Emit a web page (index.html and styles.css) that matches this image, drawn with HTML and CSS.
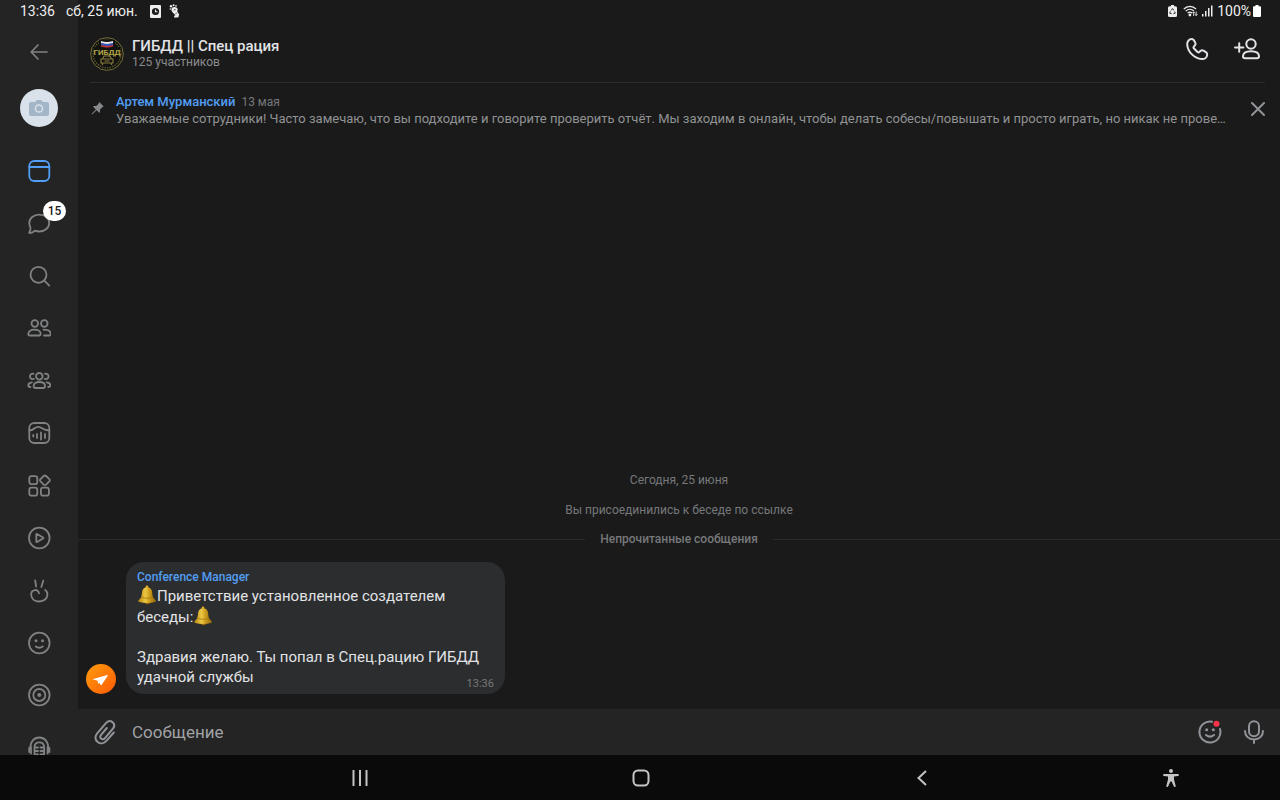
FILE: index.html
```html
<!DOCTYPE html>
<html lang="ru">
<head>
  <meta charset="UTF-8" />
  <meta name="viewport" content="width=device-width, initial-scale=1.0"/>
  <title>ГИБДД || Спец рация</title>
  <link rel="stylesheet" href="styles.css">
</head>
<body>

<div class="status-bar">
  <span class="clock">13:36</span>
  <span class="date">сб, 25 июн.</span>
  <svg class="status-app" width="11" height="13" viewBox="0 0 11 13"><rect width="11" height="13" rx="1" fill="#eee"/><circle cx="5.5" cy="6.5" r="3.6" fill="#1a1a1a"/><path d="M5.5 4.5v2.2h2" fill="none" stroke="#eee" stroke-width="1.1"/></svg>
  <svg class="status-app" width="11" height="14" viewBox="0 0 11 14" fill="#eee"><circle cx="2" cy="2.2" r="1.2"/><circle cx="4.6" cy="1.2" r="1"/><circle cx="7" cy="1.9" r=".8"/><circle cx="1.3" cy="5" r=".8"/><path d="M3 3.800c2-1.500 5-.8 5.500 1 .4 1.400-.4 2-.1 3.200l1.700 2.200-.6 3-3.800.5-.8-1.800 1.500-.7-1.900-2C2.500 8 1.800 5 3 3.800z"/><path d="M4.800 6l1.800-.4M6.400 9.800l1.300-.5" stroke="#222" stroke-width=".8"/></svg>

  <div class="status-right">
    <svg width="9" height="12" viewBox="0 0 9 12"><path d="M3 0h3v1.200h1.500A1.500 1.500 0 0 1 9 2.700v7.800A1.500 1.500 0 0 1 7.500 12h-6A1.500 1.500 0 0 1 0 10.500V2.700a1.500 1.500 0 0 1 1.500-1.500H3z" fill="#eee"/><path d="M3.200 5.400L4.500 3.600l1.300 1.800M6.600 6.600l.7 1.500-1.900.6M2.400 6.400L1.700 8.200l2 .6" fill="none" stroke="#1a1a1a" stroke-width=".9"/></svg>
    <svg class="wifi" width="15" height="12" viewBox="0 0 15 12" fill="none" stroke="#eee" stroke-width="1.200"><path d="M.8 4C4.300.4 9.700.4 13 4M2.700 6.100c2.400-2.500 6-2.500 8.300 0M4.600 8.200c1.300-1.400 3.300-1.400 4.600 0"/><circle cx="6.900" cy="10" r=".8" fill="#eee"/><path d="M10.700 11V7M9.500 8.200l1.200-1.300 1.200 1.300M13.200 6.500v4M12.200 9.300l1 1.300 1.200-1.300" stroke-width=".9"/></svg>
    <svg width="11" height="12" viewBox="0 0 11 12" fill="#eee"><rect x="0" y="9" width="1.500" height="2.500"/><rect x="3" y="6" width="1.500" height="5.500"/><rect x="6" y="3" width="1.500" height="8.500"/><rect x="9" y=".5" width="1.500" height="11"/></svg>
    <span class="charge">100%</span>
    <svg width="8" height="12" viewBox="0 0 8 12"><path d="M2.500 0h3v1.200H7a1 1 0 0 1 1 1V11a1 1 0 0 1-1 1H1a1 1 0 0 1-1-1V2.200a1 1 0 0 1 1-1h1.500z" fill="#fff"/></svg>
  </div>
</div>

<div class="app">

  <aside class="sidebar">
    <button class="icon-btn back" aria-label="Назад">
      <svg width="18" height="16" viewBox="0 0 18 16"><path d="M17 8H1.500M8 1L1.200 8 8 15"/></svg>
    </button>
    <a class="profile" href="#" aria-label="Профиль">
      <svg width="20" height="16" viewBox="0 0 20 16"><path d="M2 2h4l1.300-1.600Q7.600 0 8.200 0h3.600q.6 0 .9.400L14 2h4a2 2 0 0 1 2 2v10a2 2 0 0 1-2 2H2a2 2 0 0 1-2-2V4a2 2 0 0 1 2-2z" fill="#a3b6c7"/><circle cx="10" cy="8.500" r="3.600" fill="none" stroke="#d9e2ea" stroke-width="1.500"/></svg>
    </a>

    <ul class="menu">
      <li><a class="active" href="#" aria-label="Новости"><svg viewBox="0 0 24 24"><rect x="2.300" y="2" width="20" height="20" rx="5"/><path d="M2.300 8h20"/></svg></a></li>
      <li><a href="#" aria-label="Сообщения"><svg viewBox="0 0 24 24"><path d="M12.300 2.700c5.600 0 9.900 3.500 9.900 8.300s-4.300 8.500-9.900 8.500c-1.600 0-3-.3-4.300-.9-1.500 1.500-3.500 2.400-5.300 2.400-.5 0-.7-.5-.4-.9 1-1.500 1.400-2.800 1.200-4.500C2.700 14.300 2.300 12.700 2.300 11c0-4.800 4.400-8.300 10-8.300z"/></svg><span class="badge">15</span></a></li>
      <li><a href="#" aria-label="Поиск"><svg viewBox="0 0 24 24"><circle cx="11.500" cy="10.800" r="8"/><path d="M17.300 16.600l5 5"/></svg></a></li>
      <li><a href="#" aria-label="Друзья"><svg viewBox="0 0 24 24"><circle cx="7.800" cy="7.500" r="3.300"/><circle cx="17.300" cy="7.500" r="3.300"/><path d="M1.300 18c0-3 2.800-4.300 6.200-4.300s6.200 1.300 6.200 4.300c0 1-.4 1.500-1.400 1.500H2.700c-1 0-1.400-.5-1.400-1.500zM16.500 13.700c4 0 7.200 1.300 7.200 4.300 0 1-.4 1.500-1.400 1.500H17"/></svg></a></li>
      <li><a href="#" aria-label="Сообщества"><svg viewBox="0 0 24 24"><circle cx="12.300" cy="7.300" r="3.300"/><path d="M6.600 17c0-2.700 2.500-4 5.700-4s5.700 1.300 5.700 4c0 1.400-.5 2-1.800 2H8.400c-1.300 0-1.800-.6-1.800-2zM6.500 4.800a2.700 2.700 0 1 0 .3 5M18 4.800a2.700 2.700 0 1 1-.3 5M5 13.300c-2.400.2-3.700 1.300-3.700 3 0 1.200.6 1.700 1.800 1.700h.3M19.600 13.300c2.400.2 3.700 1.300 3.700 3 0 1.200-.6 1.700-1.800 1.700h-.3"/></svg></a></li>
      <li><a href="#" aria-label="Музыка"><svg viewBox="0 0 24 24"><rect x="2.300" y="2" width="20" height="20" rx="5"/><path d="M2.300 9.500c2.500 0 3.500-.8 5.300-2.300 2.300-1.800 4.800-1.800 7.400 0 2.200 1.500 4.300 2.300 7.300 2.300M6.300 14v1.500M10 13v4M14 11.300V18.500M18 13v4"/></svg></a></li>
      <li><a href="#" aria-label="Сервисы"><svg viewBox="0 0 24 24"><rect x="2.300" y="2.200" width="8" height="8" rx="2.200"/><rect x="2.300" y="13.700" width="8" height="8" rx="2.200"/><rect x="13.900" y="13.700" width="8" height="8" rx="2.200"/><path d="M16.700 2q1.200-1 2.400 0l3.200 3.100q1.100 1.100 0 2.300l-3.200 3.200q-1.200 1-2.400 0l-3.200-3.200q-1-1.200 0-2.300z"/></svg></a></li>
      <li><a href="#" aria-label="Видео"><svg viewBox="0 0 24 24"><circle cx="12.300" cy="12" r="10.300"/><path d="M9.300 8.400v7.200q0 .8.700.4l6-3.500q.7-.5 0-1L10 8q-.7-.4-.7.400z"/></svg></a></li>
      <li><a href="#" aria-label="Клипы"><svg viewBox="0 0 24 24"><path d="M8.200 1.500l.9 6M16.300 1.700l-2 6.300M12 14.300c-.2-2.300-2.200-3.600-4.200-3.200C5.300 11.500 4 13.500 4.200 16c.3 4 3.600 6.500 8 6.500 4.700 0 8.200-2.900 8.200-6.900 0-2-.8-3.600-2.200-4.600"/></svg></a></li>
      <li><a href="#" aria-label="Стикеры"><svg viewBox="0 0 24 24"><circle cx="12.300" cy="12" r="10.300"/><path d="M8.800 15.500q3.500 2.500 7 0"/><circle class="dot" cx="9" cy="9.700" r="1.500"/><circle class="dot" cx="15.500" cy="9.700" r="1.500"/></svg></a></li>
      <li><a href="#" aria-label="Рядом"><svg viewBox="0 0 24 24"><circle cx="12.300" cy="12" r="10.300"/><circle cx="12.300" cy="12" r="6"/><circle class="dot" cx="12.300" cy="12" r="2"/></svg></a></li>
      <li><a href="#" aria-label="Подкасты"><svg viewBox="0 0 24 24"><path d="M3.300 12C3.300 5.500 7 1.500 12.300 1.500s9 4 9 10.500M2.200 12v4M22.400 12v4M4 11v6.500M20.600 11v6.500M7.500 22V11c0-3 2-4.700 4.800-4.700S17.100 8 17.100 11v11M8 11.500h3M13.500 11.500h3.500M8 15h3M13.500 15h3.500M8 18.500h3M13.500 18.500h3.500"/></svg></a></li>
    </ul>
  </aside>

  <main class="chat">

    <header class="chat-header">
      <svg class="chat-logo" width="34" height="34" viewBox="0 0 34 34">
        <circle cx="17" cy="17" r="16.300" fill="#11120f" stroke="#77703a" stroke-width="1"/>
        <circle cx="17" cy="17" r="13.800" fill="none" stroke="#57522c" stroke-width="1.500" stroke-dasharray="1.500 1"/>
        <path d="M4 10h26v9H4zM9 3h16v8H9z" fill="#11120f"/>
        <path d="M11 4q6 2 12 0v2q-6 2-12 0z" fill="#e8e8ee"/>
        <path d="M11 6q6 2 12 0v2q-6 2-12 0z" fill="#3a58c2"/>
        <path d="M11 8q6 2 12 0v1.500q-6 2-12 0z" fill="#c6353f"/>
        <text x="17" y="18" text-anchor="middle" class="logo-text">ГИБДД</text>
        <path d="M12.500 22l1.500-3h6l1.500 3M11 22h12v4H11zM12.500 26v2M21.500 26v2M14.500 24h5" fill="none" stroke="#81783c" stroke-width="1.200"/>
      </svg>
      <div class="chat-info">
        <h1>ГИБДД || Спец рация</h1>
        <p>125 участников</p>
      </div>
      <button class="icon-btn header-btn" aria-label="Позвонить">
        <svg width="24" height="24" viewBox="0 0 24 24"><path d="M6.800 2C4 2 2 4.500 2.200 7.500 2.600 15 9.500 21.500 16.700 22c3 .2 5.300-1.600 5.500-4.300.1-1-.2-1.700-1-2.300l-2.700-1.700c-1-.7-2-.6-2.800.1l-1.400 1.300c-.5.500-1.200.4-1.800-.1l-3.700-3.700c-.5-.6-.5-1.200 0-1.700L10 8.300c.8-.9.800-1.800.2-2.700L8.700 3C8.300 2.300 7.700 2 6.800 2z"/></svg>
      </button>
      <button class="icon-btn header-btn" aria-label="Добавить участника">
        <svg width="26" height="24" viewBox="0 0 26 24"><circle cx="17" cy="7" r="4.700"/><path d="M9 19.300c0-3.300 3.600-5 8-5s8 1.700 8 5c0 1.500-.7 2-2 2H11c-1.300 0-2-.5-2-2zM5.200 6.300v8.400M1 10.500h8.400"/></svg>
      </button>
    </header>

    <section class="pinned">
      <svg class="pin" width="13" height="13" viewBox="0 0 13 13"><path d="M7.800.6q.5-.5 1 0l3.400 3.400q.5.500 0 1l-1 .3-2.300 2.400.1 2.400q-.2 1.100-1 .4L5.600 8.200 1.300 12.300.5 12.500l.2-.8L4.800 7.400 2.400 5Q1.900 4.200 2.900 4l2.400.1 2.300-2.300z" fill="#87888a"/></svg>
      <div class="pinned-body">
        <div class="pinned-head"><a href="#">Артем Мурманский</a><time>13 мая</time></div>
        <p>Уважаемые сотрудники! Часто замечаю, что вы подходите и говорите проверить отчёт. Мы заходим в онлайн, чтобы делать собесы/повышать и просто играть, но никак не прове…</p>
      </div>
      <button class="icon-btn close" aria-label="Закрыть">
        <svg width="14" height="14" viewBox="0 0 14 14"><path d="M1 1l12 12M13 1L1 13"/></svg>
      </button>
    </section>

    <section class="messages">
      <p class="service">Сегодня, 25 июня</p>
      <p class="service">Вы присоединились к беседе по ссылке</p>
      <div class="unread">Непрочитанные сообщения</div>

      <div class="message">
        <svg class="sender" width="30" height="30" viewBox="0 0 30 30">
          <defs><linearGradient id="orange" x1="0" y1="0" x2="1" y2="1"><stop offset="0" stop-color="#ff9c0c"/><stop offset="1" stop-color="#ff5a04"/></linearGradient></defs>
          <circle cx="15" cy="15" r="15" fill="url(#orange)"/>
          <path d="M6.500 15.300L21.300 11q.9-.1.500.8L15.500 21q-.5.700-.9 0L13.200 18.500 12 20.300l-.3-3.500z" fill="#fff"/>
          <path d="M12 17.500l6-4" fill="none" stroke="#ffd9b8" stroke-width=".5"/>
        </svg>
        <div class="bubble">
          <a class="author" href="#">Conference Manager</a>
          <p class="text"><svg class="bell" viewBox="0 0 20 20"><use href="#bell"/></svg>Приветствие установленное создателем<br>беседы:<svg class="bell" viewBox="0 0 20 20"><use href="#bell"/></svg><br><br>Здравия желаю. Ты попал в Спец.рацию ГИБДД<br>удачной службы</p>
          <time>13:36</time>
        </div>
      </div>
    </section>

    <form class="composer">
      <button type="button" class="icon-btn" aria-label="Прикрепить">
        <svg width="24" height="26" viewBox="0 0 24 26"><path d="M20.800 13.500l-7.400 8.300c-2.400 2.700-6 3.400-8.700 1.200-2.900-2.300-2.900-5.900-.5-8.700l8.500-10c2-2.300 4.600-2.800 6.700-1.200 2.200 1.800 2.300 4.400.5 6.600l-7.700 9.200c-1.200 1.500-2.800 1.800-4 .8-1.200-1-1.200-2.500-.1-3.900l5.700-6.800"/></svg>
      </button>
      <input type="text" name="message" placeholder="Сообщение" aria-label="Сообщение">
      <button type="button" class="icon-btn smile" aria-label="Стикеры">
        <svg width="24" height="24" viewBox="0 0 24 24"><path d="M14 1.700a10.500 10.500 0 1 0 8 7.300M8 15q4 3.300 8 0"/><circle class="dot" cx="8.700" cy="9.700" r="1.500"/><circle class="dot" cx="15.300" cy="9.700" r="1.500"/><circle cx="18.500" cy="3.800" r="3" class="red"/></svg>
      </button>
      <button type="button" class="icon-btn" aria-label="Голосовое сообщение">
        <svg width="20" height="24" viewBox="0 0 20 24"><rect x="5" y="1.200" width="10" height="15" rx="5"/><path d="M1 11c0 5 3.800 8.500 9 8.500s9-3.500 9-8.500M10 19.500V23"/></svg>
      </button>
    </form>

  </main>
</div>

<nav class="system-nav">
  <button aria-label="Недавние"><svg width="16" height="16" viewBox="0 0 16 16"><path d="M1.500 0v16M8 0v16M14.500 0v16"/></svg></button>
  <button aria-label="Домой"><svg width="18" height="18" viewBox="0 0 18 18"><rect x="1.500" y="1.500" width="15" height="15" rx="4.500"/></svg></button>
  <button aria-label="Назад"><svg width="10" height="16" viewBox="0 0 10 16"><path d="M9 1L1.500 8 9 15"/></svg></button>
  <button aria-label="Специальные возможности"><svg width="16" height="18" viewBox="0 0 16 18"><g class="person"><circle cx="8" cy="2" r="2"/><path d="M1 5h14q.9.100.9.900t-.9 1l-4 .5v3l1.700 6.600q.1.900-.8 1t-1.100-.7L8.600 12.500H7.400l-2.200 4.800q-.3.800-1.100.7t-.8-1L5 10.400v-3l-4-.5q-.9-.2-.9-1T1 5z"/></g></svg></button>
</nav>

<!-- Shared bell drawing -->
<svg class="sprite" width="0" height="0">
  <defs>
    <linearGradient id="gold" x1="0" y1="0" x2="1" y2="0"><stop offset="0" stop-color="#b98512"/><stop offset=".4" stop-color="#ecc843"/><stop offset=".65" stop-color="#cb991b"/><stop offset="1" stop-color="#8e650b"/></linearGradient>
    <symbol id="bell" viewBox="0 0 20 20">
      <ellipse cx="10.500" cy="17.800" rx="2.600" ry="1.500" fill="#8a5f08"/>
      <circle cx="10" cy="2" r="1.400" fill="#d9a92a"/>
      <path d="M10 2.300c3.300 0 5 2.200 5.200 5.500.2 3.500.8 5.400 3.300 7.200.9.700.6 1.600-.6 2-4.800 1.300-10.800 1.300-15.600 0-1.200-.4-1.300-1.300-.5-2C4.200 13.200 4.700 11 5 7.800 5.200 4.500 7 2.300 10 2.300z" fill="url(#gold)"/>
      <path d="M4.200 12.500q5.800 1.800 12 0" fill="none" stroke="#9c6f0c" stroke-width=".7"/>
    </symbol>
  </defs>
</svg>

</body>
</html>
```

FILE: styles.css
```css
* {
  box-sizing: border-box;
}

body {
  margin: 0;
  height: 100vh;
  display: flex;
  flex-direction: column;
  font-family: Roboto, sans-serif;
  background: #1a1a1a;
  color: #e1e3e6;
  overflow: hidden;
}

h1, p, ul {
  margin: 0;
  padding: 0;
}

a {
  color: #529ef4;
  text-decoration: none;
}

svg {
  display: block;
  flex-shrink: 0;
}

button {
  background: none;
  border: none;
  padding: 0;
  cursor: pointer;
}

.sprite {
  position: absolute;
}

/* Status bar */
.status-bar {
  height: 22px;
  padding: 0 19px 0 20px;
  display: flex;
  align-items: center;
  font-size: 14px;
  color: #eee;
  background: linear-gradient(to right, #242424 78px, #1a1a1a 78px);
}

.date {
  margin: 0 12px 0 11px;
}

.status-app {
  margin-right: 8px;
}

.status-right {
  margin-left: auto;
  display: flex;
  align-items: center;
  gap: 4px;
}

.wifi {
  margin-left: 2px;
}

.charge {
  margin-right: -2px;
}

.app {
  flex: 1;
  min-height: 0;
  display: flex;
}

/* Sidebar */
.sidebar {
  width: 78px;
  background: #242424;
  display: flex;
  flex-direction: column;
  align-items: center;
  overflow: hidden;
}

.icon-btn svg {
  fill: none;
  stroke: #909499;
  stroke-width: 2;
  stroke-linecap: round;
  stroke-linejoin: round;
}

.back {
  margin-top: 22px;
}

.back svg {
  stroke: #7f8183;
  stroke-width: 1.7;
}

.profile {
  margin-top: 29px;
  width: 38px;
  height: 38px;
  border-radius: 50%;
  background: #d9e2ea;
  display: flex;
  align-items: center;
  justify-content: center;
}

.menu {
  flex: 1;
  margin: 18px 0 -19px;
  list-style: none;
  display: flex;
  flex-direction: column;
}

.menu li {
  flex: 1;
  display: flex;
  align-items: center;
}

.menu a {
  position: relative;
}

.menu svg {
  width: 24px;
  height: 24px;
  fill: none;
  stroke: #7f8183;
  stroke-width: 1.8;
  stroke-linecap: round;
  stroke-linejoin: round;
}

.menu .active svg {
  stroke: #529ef4;
}

.menu .dot {
  fill: #7f8183;
  stroke: none;
}

.badge {
  position: absolute;
  left: 16px;
  top: -11px;
  width: 23px;
  height: 20px;
  border-radius: 10px;
  background: #fff;
  color: #19191a;
  font-size: 12px;
  font-weight: 500;
  line-height: 20px;
  text-align: center;
}

/* Chat */
.chat {
  flex: 1;
  min-width: 0;
  display: flex;
  flex-direction: column;
}

.chat-header {
  height: 61px;
  margin: 0 15px 0 12px;
  padding-top: 3px;
  border-bottom: 1px solid #2c2c2d;
  display: flex;
  align-items: center;
}

.logo-text {
  font-size: 8px;
  font-weight: 700;
  fill: #b3a544;
}

.chat-info {
  flex: 1;
  margin-left: 8px;
}

.chat-info h1 {
  font-size: 15px;
  font-weight: 500;
  line-height: 18px;
}

.chat-info p {
  font-size: 12px;
  line-height: 15px;
  color: #8a8b8d;
}

.header-btn {
  margin: 0 5px 10px 20px;
}

.header-btn svg {
  stroke: #e1e3e6;
}

.pinned {
  padding: 10px 15px 8px 13px;
  display: flex;
  align-items: center;
}

.pin {
  margin-bottom: 3px;
}

.pinned-body {
  flex: 1;
  min-width: 0;
  margin: 0 20px 0 12px;
}

.pinned-head {
  font-size: 13px;
  line-height: 17px;
}

.pinned-head a {
  font-weight: 500;
}

.pinned-head time {
  margin-left: 6px;
  font-size: 12px;
  color: #76787a;
}

.pinned p {
  font-size: 13px;
  line-height: 16px;
  color: #909294;
  white-space: nowrap;
  overflow: hidden;
  text-overflow: ellipsis;
}

.close {
  margin-bottom: 3px;
}

.messages {
  flex: 1;
  display: flex;
  flex-direction: column;
  justify-content: flex-end;
}

.service {
  margin-bottom: 14px;
  font-size: 12px;
  line-height: 16px;
  text-align: center;
  color: #76787a;
}

.unread {
  display: flex;
  align-items: center;
  gap: 15px;
  font-size: 12px;
  font-weight: 500;
  line-height: 14px;
  color: #76787a;
}

.unread::before,
.unread::after {
  content: "";
  flex: 1;
  height: 1px;
  background: #2a2a2b;
}

.message {
  margin: 16px 0 15px;
  padding: 0 8px;
  display: flex;
  align-items: flex-end;
  gap: 10px;
}

.bubble {
  position: relative;
  width: 379px;
  padding: 7px 11px;
  border-radius: 18px;
  background: #2c2d2e;
}

.author {
  display: block;
  font-size: 12px;
  font-weight: 500;
  line-height: 16px;
}

.text {
  font-size: 15px;
  line-height: 20px;
}

.bell {
  display: inline-block;
  width: 20px;
  height: 20px;
  vertical-align: -4px;
}

.bubble time {
  position: absolute;
  right: 11px;
  bottom: 3px;
  font-size: 11px;
  line-height: 14px;
  color: #76787a;
}

.composer {
  height: 46px;
  padding: 0 16px 0 15px;
  display: flex;
  align-items: center;
  background: #242424;
}

.composer input {
  flex: 1;
  min-width: 0;
  margin: 0 15px;
  padding: 0;
  border: none;
  outline: none;
  background: none;
  color: #e1e3e6;
  font-family: inherit;
  font-size: 17px;
}

.composer input::placeholder {
  color: #a0a2a5;
}

.smile {
  margin-right: 22px;
}

.composer .dot {
  fill: #909499;
  stroke: none;
}

.composer .red {
  fill: #ff3347;
  stroke: none;
}

/* Android navigation buttons */
.system-nav {
  height: 45px;
  padding-left: 220px;
  display: grid;
  grid-template-columns: 1fr 1fr 1fr 218px;
  background: #0a0a0a;
}

.system-nav button {
  display: flex;
  align-items: center;
  justify-content: center;
}

.system-nav svg {
  fill: none;
  stroke: #c4c4c4;
  stroke-width: 2;
}

.system-nav .person {
  fill: #c4c4c4;
  stroke: none;
}
```
